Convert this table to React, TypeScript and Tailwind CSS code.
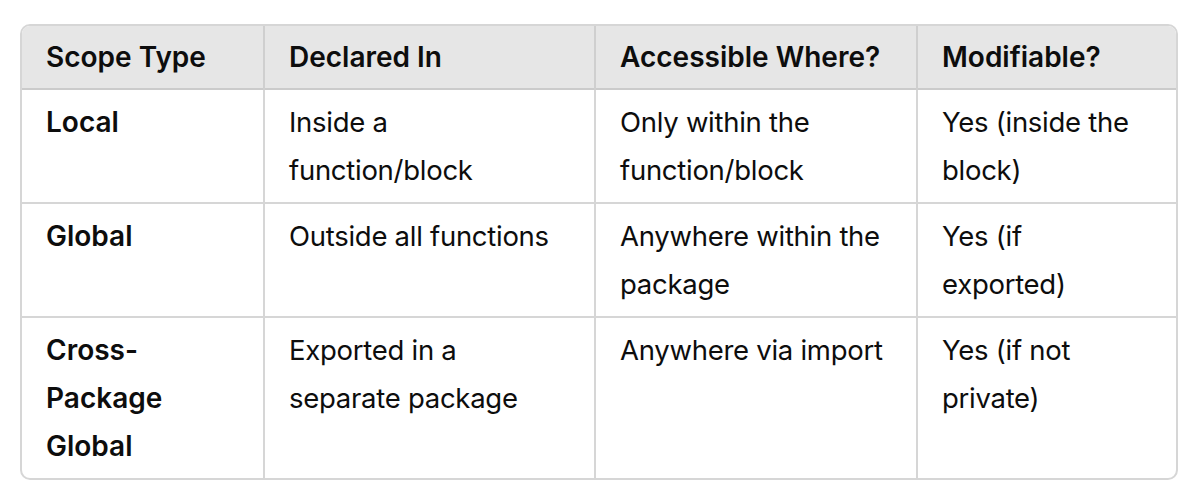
const headers = ['Scope Type', 'Declared In', 'Accessible Where?', 'Modifiable?'];

const rows: string[][] = [
  ['Local', 'Inside a function/block', 'Only within the function/block', 'Yes (inside the block)'],
  ['Global', 'Outside all functions', 'Anywhere within the package', 'Yes (if exported)'],
  ['Cross-Package Global', 'Exported in a separate package', 'Anywhere via import', 'Yes (if not private)'],
];

const colWidths = ['w-[242px]', 'w-[331px]', 'w-[322px]', 'w-[259px]'];

export default function App() {
  return (
    <div className="w-[1204px] h-[496px] bg-white pt-[24px] pl-[20px] font-['Inter','Liberation_Sans',sans-serif] text-[#0d0d0d]">
      <div className="w-[1158px] border-2 border-[#d6d6d6] rounded-[10px] overflow-hidden">
        <table className="table-fixed border-collapse w-full leading-[48px]">
          <colgroup>
            {colWidths.map((w) => (
              <col key={w} className={w} />
            ))}
          </colgroup>
          <thead>
            <tr className="bg-[#e6e6e6] border-b-2 border-[#cbcbcb]">
              {headers.map((h, i) => (
                <th
                  key={h}
                  className={`text-left text-[28px] font-semibold px-[24px] py-[7px] align-top ${i > 0 ? 'border-l-2 border-[#cfcfcf]' : ''}`}
                >
                  {h}
                </th>
              ))}
            </tr>
          </thead>
          <tbody>
            {rows.map((r, ri) => (
              <tr key={ri} className={ri > 0 ? 'border-t-2 border-[#d6d6d6]' : ''}>
                {r.map((c, i) => (
                  <td
                    key={i}
                    className={`px-[24px] py-[8px] align-top ${i === 0 ? 'text-[28px] font-semibold' : 'text-[27.5px] tracking-[-0.01em] border-l-2 border-[#d6d6d6]'}`}
                  >
                    {c}
                  </td>
                ))}
              </tr>
            ))}
          </tbody>
        </table>
      </div>
    </div>
  );
}
